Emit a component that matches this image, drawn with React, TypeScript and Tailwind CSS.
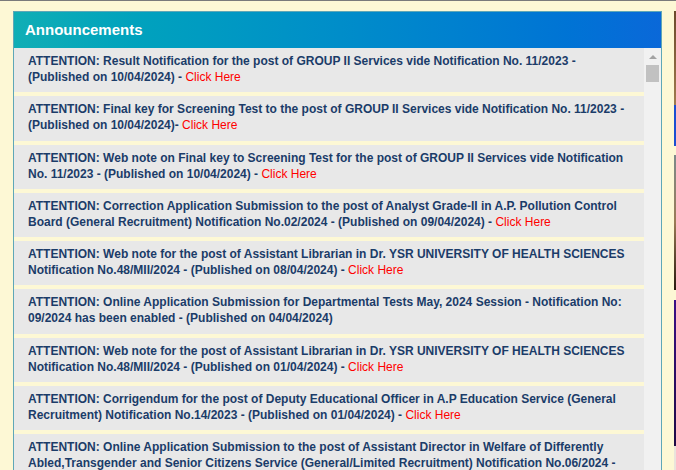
const items: { text: string; link: boolean }[] = [
  {
    text: 'ATTENTION: Result Notification for the post of GROUP II Services vide Notification No. 11/2023 - (Published on 10/04/2024) - ',
    link: true,
  },
  {
    text: 'ATTENTION: Final key for Screening Test to the post of GROUP II Services vide Notification No. 11/2023 - (Published on 10/04/2024)- ',
    link: true,
  },
  {
    text: 'ATTENTION: Web note on Final key to Screening Test for the post of GROUP II Services vide Notification No. 11/2023 - (Published on 10/04/2024) - ',
    link: true,
  },
  {
    text: 'ATTENTION: Correction Application Submission to the post of Analyst Grade-II in A.P. Pollution Control Board (General Recruitment) Notification No.02/2024 - (Published on 09/04/2024) - ',
    link: true,
  },
  {
    text: 'ATTENTION: Web note for the post of Assistant Librarian in Dr. YSR UNIVERSITY OF HEALTH SCIENCES Notification No.48/MII/2024 - (Published on 08/04/2024) - ',
    link: true,
  },
  {
    text: 'ATTENTION: Online Application Submission for Departmental Tests May, 2024 Session - Notification No: 09/2024 has been enabled - (Published on 04/04/2024)',
    link: false,
  },
  {
    text: 'ATTENTION: Web note for the post of Assistant Librarian in Dr. YSR UNIVERSITY OF HEALTH SCIENCES Notification No.48/MII/2024 - (Published on 01/04/2024) - ',
    link: true,
  },
  {
    text: 'ATTENTION: Corrigendum for the post of Deputy Educational Officer in A.P Education Service (General Recruitment) Notification No.14/2023 - (Published on 01/04/2024) - ',
    link: true,
  },
  {
    text: 'ATTENTION: Online Application Submission to the post of Assistant Director in Welfare of Differently Abled,Transgender and Senior Citizens Service (General/Limited Recruitment) Notification No.06/2024 - (Published on 28/03/2024) - ',
    link: true,
  },
];

function Scrollbar() {
  return (
    <div className="w-[17px] shrink-0 bg-[#f1f1f1] flex flex-col items-center pt-[7px]">
      <div className="w-0 h-0 border-l-[4px] border-r-[4px] border-b-[4px] border-l-transparent border-r-transparent border-b-[#a3a3a3]" />
      <div className="mt-[6px] w-[13px] h-[17px] bg-[#c1c1c1]" />
    </div>
  );
}

export default function App() {
  return (
    <div
      className="h-[470px] overflow-hidden bg-[#fdf8d5] border-t border-[#7a7a7a] flex items-start"
      style={{ fontFamily: '"Liberation Sans", Arial, sans-serif' }}
    >
      <div className="ml-[13px] mt-[10px] w-[649px] shrink-0 border border-[#5fa7b7]">
        <div className="h-[36px] flex items-center px-[11px] bg-gradient-to-r from-[#10aeb5] to-[#0a68d9]">
          <span className="text-white font-bold text-[15px]">Announcements</span>
        </div>
        <div className="flex">
          <div className="flex-1">
            {items.map((item, i) => (
              <div
                key={i}
                className="bg-[#e8e8e8] px-[14px] pt-[5px] pb-[7.25px] mb-[4px] text-[12px] leading-[16px] font-bold text-[#1b3c69]"
              >
                {item.text}
                {item.link && <a className="text-[#ff0000] font-normal cursor-pointer">Click Here</a>}
              </div>
            ))}
          </div>
          <Scrollbar />
        </div>
      </div>
      <div className="ml-[12px] mt-[10px] w-[200px] shrink-0 flex flex-col">
        <div className="h-[94px] bg-gradient-to-b from-[#6b4a2c] to-[#a07a4e]" />
        <div className="h-[41px] bg-[#1c4fd1]" />
        <div className="mt-[9px] h-[135px] bg-gradient-to-b from-[#7c8a8a] via-[#9a7a55] to-[#2a1a10]" />
        <div className="mt-[10px] h-[146px] bg-gradient-to-b from-[#3b0f86] to-[#1e0a45]" />
        <div className="h-[40px] bg-[#eae4dc]" />
      </div>
    </div>
  );
}
